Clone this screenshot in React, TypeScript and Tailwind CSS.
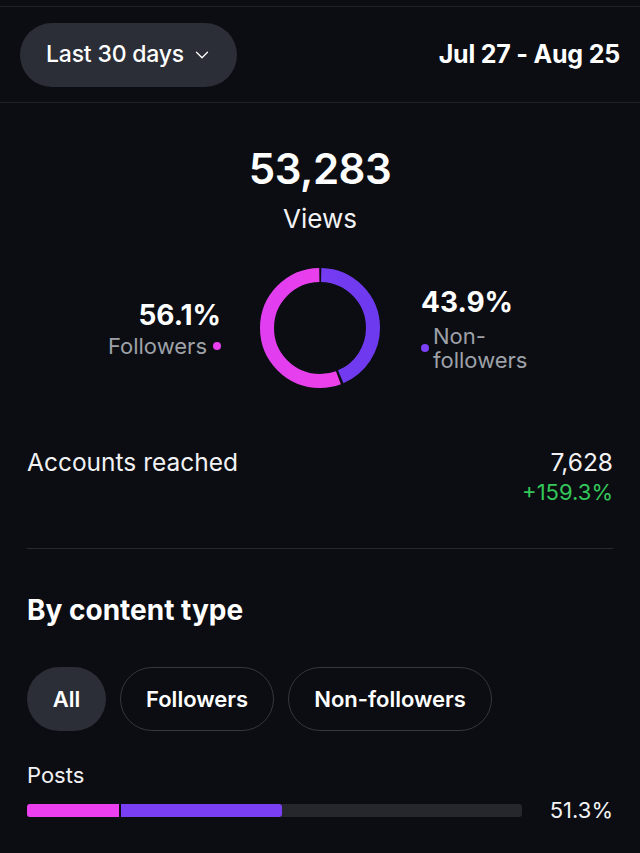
import { ChevronDown } from 'lucide-react';

const font = { fontFamily: 'Inter, "Noto Sans", sans-serif' };

function Donut() {
  const r = 53;
  const c = 2 * Math.PI * r;
  const gap = 2.5;
  const purple = 0.439 * c;
  const pink = c - purple;
  return (
    <svg width="120" height="120" viewBox="0 0 120 120">
      <defs>
        <linearGradient id="pk" x1="0" y1="0" x2="0" y2="1">
          <stop offset="0%" stopColor="#e03ef0" />
          <stop offset="100%" stopColor="#f441e6" />
        </linearGradient>
        <linearGradient id="pu" x1="0" y1="0" x2="0" y2="1">
          <stop offset="0%" stopColor="#7e3df5" />
          <stop offset="100%" stopColor="#6e3aef" />
        </linearGradient>
      </defs>
      <g transform="rotate(-90 60 60)">
        <circle
          cx="60"
          cy="60"
          r={r}
          fill="none"
          stroke="url(#pu)"
          strokeWidth="14"
          strokeDasharray={`${purple - gap} ${c}`}
          strokeDashoffset={-gap / 2}
        />
        <circle
          cx="60"
          cy="60"
          r={r}
          fill="none"
          stroke="url(#pk)"
          strokeWidth="14"
          strokeDasharray={`${pink - gap} ${c}`}
          strokeDashoffset={-(purple + gap / 2)}
        />
      </g>
    </svg>
  );
}

export default function App() {
  return (
    <div className="w-[640px] h-[853px] overflow-hidden bg-[#0b0d12] text-white" style={font}>
      <div className="h-[6px]" />
      <div className="h-px bg-[#1e2128]" />

      {/* Header */}
      <div className="flex items-center justify-between px-5 h-[95px]">
        <button className="flex items-center gap-[7px] h-16 pl-[26px] pr-[24px] rounded-full bg-[#2b2e36] text-[23px] font-medium tracking-[-0.2px]">
          Last 30 days
          <ChevronDown className="w-[22px] h-[22px]" strokeWidth={1.4} />
        </button>
        <span className="text-[25px] font-bold tracking-[-0.2px]">Jul 27 - Aug 25</span>
      </div>
      <div className="h-px bg-[#1e2128]" />

      {/* Views */}
      <div className="flex flex-col items-center pt-[40px]">
        <p className="text-[42px] leading-[52px] font-semibold tracking-[-0.5px]">53,283</p>
        <p className="text-[26px] leading-[32px] mt-[8px] text-[#f2f2f4]">Views</p>
      </div>

      <div className="flex items-start justify-center mt-[33px] h-[120px]">
        <div className="w-[200px] flex flex-col items-end pr-[39px] pt-[31px]">
          <p className="text-[28px] leading-[32px] font-bold">56.1%</p>
          <div className="flex items-center gap-[6px]">
            <span className="text-[22px] leading-[30px] text-[#9ea1a8]">Followers</span>
            <span className="w-[8px] h-[8px] rounded-full bg-[#ec3ff0]" />
          </div>
        </div>
        <Donut />
        <div className="w-[200px] pl-[41px] pt-[18px]">
          <p className="text-[28px] leading-[32px] font-bold">43.9%</p>
          <div className="flex items-center gap-[4px] mt-[6px]">
            <span className="w-[8px] h-[8px] rounded-full bg-[#7c40f5]" />
            <span className="text-[22px] leading-[24px] text-[#9ea1a8]">
              Non-
              <br />
              followers
            </span>
          </div>
        </div>
      </div>

      {/* Accounts reached */}
      <div className="flex justify-between px-[27px] mt-[59px]">
        <span className="text-[24.5px] leading-[30px] text-[#f2f2f4]">Accounts reached</span>
        <div className="flex flex-col items-end">
          <span className="text-[24.5px] leading-[30px] text-[#f2f2f4]">7,628</span>
          <span className="text-[22px] leading-[30px] text-[#34c759]">+159.3%</span>
        </div>
      </div>
      <div className="mx-[27px] mt-[41px] h-px bg-[#26292f]" />

      {/* By content type */}
      <p className="px-[27px] mt-[45px] text-[28px] leading-[32px] font-bold">By content type</p>

      <div className="flex gap-[14px] px-[27px] mt-[41px]">
        <span className="h-16 w-[79px] flex items-center justify-center rounded-full bg-[#2b2e36] text-[22px] font-semibold">
          All
        </span>
        <span className="h-16 px-[25px] flex items-center rounded-full border border-[#34373e] text-[22px] font-semibold">
          Followers
        </span>
        <span className="h-16 px-[25px] flex items-center rounded-full border border-[#34373e] text-[22px] font-semibold">
          Non-followers
        </span>
      </div>

      <p className="px-[27px] mt-[31px] text-[22px] leading-[26px] text-[#f2f2f4]">Posts</p>
      <div className="flex items-center px-[27px] mt-[8px] h-[28px]">
        <div className="w-[495px] h-[13px] rounded-[3px] bg-[#25272d] flex overflow-hidden">
          <div className="w-[92px] h-full bg-[#ec3ff0]" />
          <div className="w-[2px] h-full bg-[#0b0d12]" />
          <div className="w-[161px] h-full bg-[#7a3ff5] rounded-r-[3px]" />
        </div>
        <span className="ml-auto text-[22px] leading-[28px] text-[#f2f2f4]">51.3%</span>
      </div>
    </div>
  );
}
